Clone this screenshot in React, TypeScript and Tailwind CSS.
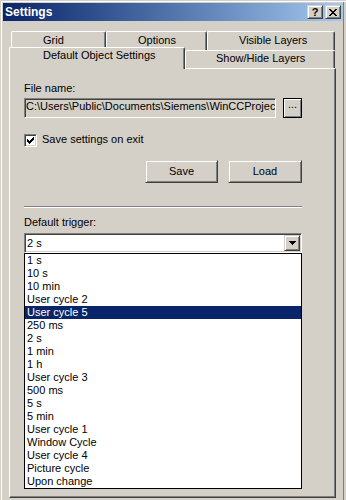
import React from "react";

const raised =
  "border border-t-[#d4d0c8] border-l-[#d4d0c8] border-r-[#404040] border-b-[#404040] shadow-[inset_1px_1px_0_#ffffff,inset_-1px_-1px_0_#808080]";
const sunken =
  "border border-t-[#808080] border-l-[#808080] border-r-white border-b-white shadow-[inset_1px_1px_0_#404040,inset_-1px_-1px_0_#d4d0c8]";
const tabBase =
  "bg-[#d4d0c8] border-t border-l border-r border-t-white border-l-white border-r-[#404040] shadow-[inset_-1px_0_0_#808080] rounded-t-[2px] whitespace-nowrap leading-[13px]";

const checkRows = [
  "......#",
  ".....##",
  "#...###",
  "##.###.",
  "#####..",
  ".###...",
  "..#....",
];

const closeRows = [
  "##....##",
  ".##..##.",
  "..####..",
  "...##...",
  "..####..",
  ".##..##.",
  "##....##",
];

const arrowRows = ["#######", ".#####.", "..###..", "...#..."];

const triggers = [
  "1 s",
  "10 s",
  "10 min",
  "User cycle 2",
  "User cycle 5",
  "250 ms",
  "2 s",
  "1 min",
  "1 h",
  "User cycle 3",
  "500 ms",
  "5 s",
  "5 min",
  "User cycle 1",
  "Window Cycle",
  "User cycle 4",
  "Picture cycle",
  "Upon change",
];

function Pixels({ rows }: { rows: string[] }) {
  const w = rows[0].length;
  const h = rows.length;
  return (
    <svg width={w} height={h} viewBox={`0 0 ${w} ${h}`} shapeRendering="crispEdges">
      {rows.flatMap((row, y) =>
        row
          .split("")
          .map((c, x) =>
            c === "#" ? <rect key={`${x}-${y}`} x={x} y={y} width={1} height={1} fill="#000" /> : null
          )
      )}
    </svg>
  );
}

export default function App() {
  return (
    <div className="w-[346px] h-[500px] overflow-hidden bg-[#d4d0c8] font-['Liberation_Sans',Arial,sans-serif] text-[11px] text-black shadow-[inset_1px_1px_0_#d4d0c8,inset_2px_2px_0_#ffffff,inset_-2px_0_0_#d4d0c8,inset_-3px_0_0_#808080]">
      {/* Title bar */}
      <div className="mx-[3px] pt-[3px]">
        <div className="h-[18px] flex items-center px-[2px] bg-linear-to-r from-[#0a246a] to-[#a6caf0]">
          <span className="flex-1 text-white font-bold text-[12px] leading-[14px]">Settings</span>
          <div className={`${raised} w-[16px] h-[14px] flex items-center justify-center bg-[#d4d0c8] font-bold text-[11px] leading-[11px]`}>
            ?
          </div>
          <div className={`${raised} ml-[2px] w-[16px] h-[14px] flex items-center justify-center bg-[#d4d0c8]`}>
            <Pixels rows={closeRows} />
          </div>
        </div>
      </div>

      {/* Tabs + panel */}
      <div className="ml-[9px] mt-[10px] w-[327px]">
        <div className="flex h-[19px] ml-[2px]">
          <div className={`${tabBase} w-[95px] pl-[31px] pt-[2px]`}>Grid</div>
          <div className={`${tabBase} w-[101px] pl-[31px] pt-[2px]`}>Options</div>
          <div className={`${tabBase} w-[128px] pl-[31px] pt-[2px]`}>Visible Layers</div>
        </div>
        <div className="flex items-end h-[21px] -mt-[3px]">
          <div className={`${tabBase} self-start relative z-10 h-[22px] w-[176px] pl-[33px] pt-[1px]`}>
            Default Object Settings
          </div>
          <div className={`${tabBase} h-[18px] w-[150px] pl-[30px] pt-[1px]`}>Show/Hide Layers</div>
        </div>

        <div className="h-[430px] border border-t-white border-l-white border-r-[#404040] border-b-[#404040] shadow-[inset_-1px_-1px_0_#808080]">
          <div className="pl-[14px] pt-[13px] flex flex-col w-[292px]">
            <div className="leading-[13px]">File name:</div>
            <div className="mt-[3px] flex h-[20px]">
              <div className={`${sunken} w-[252px] h-full pl-[1px] pt-[1px] leading-[13px] overflow-hidden whitespace-nowrap`}>
                {"C:\\Users\\Public\\Documents\\Siemens\\WinCCProjec"}
              </div>
              <div className="ml-[7px] w-[19px] h-full border border-black shadow-[inset_1px_1px_0_#ffffff,inset_-1px_-1px_0_#808080] flex justify-center leading-[11px]">
                ...
              </div>
            </div>

            <div className="mt-[16px] flex items-start">
              <div className={`${sunken} w-[13px] h-[13px] bg-white flex items-center justify-center`}>
                <Pixels rows={checkRows} />
              </div>
              <span className="ml-[5px] -mt-[1px] leading-[13px]">Save settings on exit</span>
            </div>

            <div className="mt-[13px] flex justify-end">
              <div className={`${raised} w-[73px] h-[23px] flex items-center justify-center pb-[1px] leading-[13px]`}>
                Save
              </div>
              <div className={`${raised} ml-[10px] w-[74px] h-[23px] flex items-center justify-center pb-[1px] leading-[13px]`}>
                Load
              </div>
            </div>

            <div className="mt-[23px] h-[2px] border-t border-t-[#808080] border-b border-b-white" />

            <div className="mt-[8px] leading-[13px]">Default trigger:</div>
            <div className={`${sunken} mt-[4px] h-[20px] p-[1px] flex bg-white`}>
              <div className="flex-1 pl-[1px] leading-[16px]">2 s</div>
              <div className={`${raised} w-[16px] h-full bg-[#d4d0c8] flex items-center justify-center`}>
                <Pixels rows={arrowRows} />
              </div>
            </div>
            <div className="h-[236px] border border-black bg-white">
              {triggers.map((t, i) => (
                <div
                  key={i}
                  className={`h-[13px] leading-[13px] pl-[2px] whitespace-nowrap ${
                    t === "User cycle 5" ? "bg-[#0a246a] text-white" : ""
                  }`}
                >
                  {t}
                </div>
              ))}
            </div>
          </div>
        </div>
      </div>
    </div>
  );
}
